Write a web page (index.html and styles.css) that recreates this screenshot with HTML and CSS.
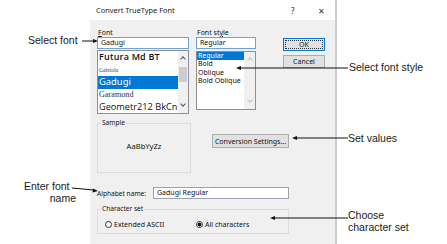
FILE: index.html
```html
<!DOCTYPE html>
<html lang="en">
  <head>
    <meta charset="UTF-8" />
    <title>Convert TrueType Font</title>
    <link rel="stylesheet" href="styles.css">
  </head>
  <body>
    <div class="stage">
      <div class="dialog">
        <div class="titlebar">
          <span class="title">Convert TrueType Font</span>
          <span class="tb-help">?</span>
          <span class="tb-close">&#x2715;</span>
        </div>

        <div class="dlg-body">
          <div class="top-row">
            <div class="font-col">
              <div class="field-label"><u>F</u>ont</div>
              <div class="input focus">Gadugi</div>
              <div class="listbox font-list">
                <ul class="items">
                  <li class="f-futura">Futura Md BT</li>
                  <li class="f-gabriola">Gabriola</li>
                  <li class="f-gadugi selected">Gadugi</li>
                  <li class="f-garamond">Garamond</li>
                  <li class="f-geometr">Geometr212 BkCn</li>
                </ul>
                <div class="scrollbar">
                  <span class="chev up"></span>
                  <span class="thumb"></span>
                  <span class="chev down"></span>
                </div>
              </div>
            </div>

            <div class="style-col">
              <div class="field-label">Font st<u>y</u>le</div>
              <div class="input focus">Regular</div>
              <div class="listbox style-list">
                <ul class="items">
                  <li class="selected">Regular</li>
                  <li>Bold</li>
                  <li>Oblique</li>
                  <li>Bold Oblique</li>
                </ul>
                <div class="scrollbar disabled">
                  <span class="chev up"></span>
                  <span class="chev down"></span>
                </div>
              </div>
            </div>

            <div class="btn-col">
              <button class="btn btn-default"><span>OK</span></button>
              <button class="btn">Cancel</button>
            </div>
          </div>

          <div class="mid-row">
            <div class="group sample">
              <span class="group-label">Sample</span>
              <div class="sample-text">AaBbYyZz</div>
            </div>
            <button class="btn btn-wide">Conversion Settings...</button>
          </div>

          <div class="name-row">
            <span class="name-label">Alphabet name:</span>
            <div class="input name-input">Gadugi Regular</div>
          </div>

          <div class="group charset">
            <span class="group-label">Character set</span>
            <div class="radios">
              <span class="radio"><span class="dot"></span>Extended ASCII</span>
              <span class="radio checked"><span class="dot"></span>All characters</span>
            </div>
          </div>
        </div>
      </div>

      <svg class="callout-lines" width="447" height="244" viewBox="0 0 447 244">
        <line x1="82" y1="41" x2="94" y2="41" />
        <polygon points="98,41 93,39 93,43" />
        <line x1="240" y1="68" x2="348" y2="68" />
        <polygon points="236,68 241,66 241,70" />
        <line x1="296" y1="138" x2="348" y2="138" />
        <polygon points="292,138 297,136 297,140" />
        <line x1="274" y1="218" x2="348" y2="218" />
        <polygon points="270,218 275,216 275,220" />
        <line x1="72" y1="188" x2="94" y2="190" />
        <polygon points="98,191 93,188.5 92.6,192.5" />
      </svg>

      <div class="callout c-font">Select font</div>
      <div class="callout c-style">Select font style</div>
      <div class="callout c-values">Set values</div>
      <div class="callout c-charset">Choose<br />character set</div>
      <div class="callout c-name"><span class="first">Enter font</span><br />name</div>
    </div>
  </body>
</html>
```

FILE: styles.css
```css
* {
  margin: 0;
  padding: 0;
  box-sizing: border-box;
}
body {
  background: #fff;
  font-family: "Noto Sans", "Open Sans", sans-serif;
  color: #111;
  overflow: hidden;
}
.stage {
  position: relative;
  width: 447px;
  height: 244px;
}

/* dialog window */
.dialog {
  margin-left: 90px;
  width: 247px;
  height: 244px;
  background: #f0f0f0;
  border-right: 2px solid #cdcdcd;
  font-size: 7px;
}
.titlebar {
  height: 20px;
  background: #fff;
  display: flex;
  align-items: center;
  padding-left: 6px;
  font-size: 7.4px;
  color: #1a1a1a;
}
.title {
  flex: 1;
}
.tb-help {
  width: 10px;
  font-size: 8px;
}
.tb-close {
  width: 12px;
  margin: 0 5px 0 17px;
  font-size: 8px;
  color: #333;
}
.dlg-body {
  padding: 8px 10px 0 7px;
}

.top-row {
  display: flex;
  height: 86px;
}
.font-col {
  width: 92px;
}
.style-col {
  width: 60px;
  margin-left: 7px;
}
.btn-col {
  width: 42px;
  margin-left: 27px;
  padding-top: 10px;
  display: flex;
  flex-direction: column;
  gap: 4px;
}
.field-label {
  height: 9px;
  line-height: 9px;
  padding-left: 1px;
}
.input {
  height: 12px;
  line-height: 10px;
  background: #fff;
  border: 1px solid #9aa4b0;
  padding-left: 3px;
}
.input.focus {
  border-color: #6fa3dc;
}

.listbox {
  display: flex;
  background: #fff;
  border: 1px solid #8c8f94;
  overflow: hidden;
}
.font-list {
  height: 64px;
  margin-top: 1px;
}
.style-list {
  height: 59px;
  margin-top: 2px;
}
.items {
  list-style: none;
  flex: 1;
  overflow: hidden;
  white-space: nowrap;
}
.font-list li {
  height: 12.5px;
  line-height: 12.5px;
  padding-left: 1px;
  overflow: hidden;
}
.style-list li {
  height: 8.3px;
  line-height: 8.3px;
  padding-left: 1px;
}
.items li.selected {
  background: #0078d7;
  color: #fff;
}
.f-futura {
  font-family: "Open Sans", sans-serif;
  font-weight: 600;
  font-size: 9px;
  letter-spacing: 0.2px;
}
.f-gabriola {
  font-family: "Liberation Serif", serif;
  font-size: 5.5px;
  color: #333;
}
.f-gadugi {
  font-size: 9.4px;
}
.f-garamond {
  font-family: "Liberation Serif", serif;
  font-size: 8.2px;
  color: #333;
}
.f-geometr {
  font-family: "Open Sans", sans-serif;
  font-size: 9.2px;
}

.scrollbar {
  width: 10px;
  background: #f0f0f0;
  position: relative;
  display: flex;
  flex-direction: column;
  align-items: center;
}
.style-list .scrollbar {
  width: 11px;
}
.chev {
  width: 4px;
  height: 4px;
  border-left: 1px solid #555;
  border-top: 1px solid #555;
}
.chev.up {
  margin-top: 6px;
  transform: rotate(45deg);
}
.chev.down {
  margin-top: auto;
  margin-bottom: 7px;
  transform: rotate(225deg);
}
.scrollbar.disabled .chev {
  border-color: #c4c4c4;
}
.thumb {
  width: 8px;
  height: 15px;
  margin-top: 6px;
  background: #cdcdcd;
}

.btn {
  font-family: inherit;
  font-size: 7px;
  color: #111;
  height: 13px;
  background: #e1e1e1;
  border: 1px solid #adadad;
}
.btn-default {
  border-color: #0078d7;
  padding: 1px;
}
.btn-default span {
  display: block;
  height: 100%;
  line-height: 8px;
  border: 1px dotted #333;
}

.mid-row {
  display: flex;
  align-items: flex-start;
  margin-top: 9px;
}
.group {
  position: relative;
  border: 1px solid #dcdcdc;
}
.group-label {
  position: absolute;
  top: -5px;
  left: 3px;
  padding: 0 1px;
  background: #f0f0f0;
  line-height: 8px;
  font-size: 6.6px;
}
.sample {
  width: 94px;
  height: 50px;
  padding-top: 17px;
  text-align: center;
}
.sample-text {
  line-height: 10px;
  font-size: 7.6px;
}
.btn-wide {
  width: 77px;
  height: 14px;
  margin: 11px 0 0 21px;
}

.name-row {
  display: flex;
  align-items: center;
  margin-top: 14px;
  height: 12px;
}
.name-label {
  width: 56px;
  font-size: 6.6px;
}
.name-input {
  width: 136px;
}

.charset {
  width: 192px;
  height: 25px;
  margin-top: 10px;
  padding: 10px 0 0 7px;
}
.radios {
  display: grid;
  grid-template-columns: 91px auto;
  line-height: 9px;
}
.radio {
  display: flex;
  align-items: center;
}
.dot {
  width: 7px;
  height: 7px;
  margin-right: 2px;
  border: 1px solid #333;
  border-radius: 50%;
  background: #fff;
}
.radio.checked .dot {
  background: radial-gradient(circle, #111 0 1.8px, #fff 2.2px);
}

/* callouts */
.callout-lines {
  position: absolute;
  top: 0;
  left: 0;
  pointer-events: none;
}
.callout-lines line {
  stroke: #111;
  stroke-width: 1;
}
.callout-lines polygon {
  fill: #111;
}
.callout {
  position: absolute;
  font-family: "Liberation Sans", Arial, sans-serif;
  font-size: 10.5px;
  line-height: 12px;
  color: #1a1a1a;
  white-space: nowrap;
}
.c-font {
  left: 28px;
  top: 34px;
}
.c-style {
  left: 349px;
  top: 61px;
}
.c-values {
  left: 348px;
  top: 132px;
}
.c-charset {
  left: 348px;
  top: 209px;
}
.c-name {
  left: 24px;
  width: 52px;
  top: 180px;
  text-align: right;
}
.c-name .first {
  padding-right: 7px;
}
```
